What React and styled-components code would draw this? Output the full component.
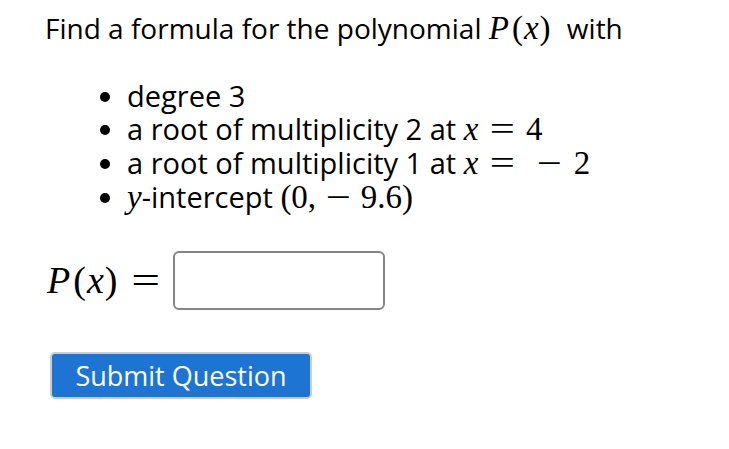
import React from 'react'
import styled, { createGlobalStyle } from 'styled-components'

const GlobalStyle = createGlobalStyle`
  html, body {
    margin: 0;
    padding: 0;
    background: #fff;
  }
  body {
    font-family: 'Open Sans', 'DejaVu Sans', sans-serif;
    color: #000;
  }
`

const Page = styled.div`
  padding: 11px 0 0 45px;
  font-size: 28px;
`

const Prompt = styled.p`
  margin: 0;
  line-height: 34px;
`

const Conditions = styled.ul`
  margin: 34px 0 0 0;
  padding: 0 0 0 82px;
  font-size: 29px;
  line-height: 33px;
`

/* inline math, KaTeX-ish */
const Math = styled.span`
  font-family: 'Liberation Serif', 'Times New Roman', serif;
  font-size: ${p => p.$size || '33px'};
  line-height: 1;
  white-space: nowrap;
  margin-right: ${p => p.$after || '0'};
`

const V = styled.span`
  font-style: italic;
  margin: ${p => p.$m || '0'};
`

const N = styled.span`
  margin: ${p => p.$m || '0'};
`

// relation / binary operator: thin strokes, stretched wide like the TeX glyphs
const Op = styled.span`
  display: inline-block;
  transform: scaleX(1.35);
  margin: ${p => p.$m || '0 14px'};
`

const AnswerRow = styled.div`
  display: flex;
  align-items: center;
  margin-top: 37px;
  height: 59px;
`

const AnswerLabel = styled.span`
  display: inline-block;
  width: 128px;
  padding: 0 0 0 2px;
  box-sizing: border-box;
`

const AnswerInput = styled.input`
  width: 212px;
  height: 59px;
  box-sizing: border-box;
  border: 2px solid #858585;
  border-radius: 6px;
  font-size: 22px;
  padding: 0 10px;
  outline: none;
  background: #fff;
`

const SubmitButton = styled.button`
  display: flex;
  align-items: center;
  justify-content: center;
  margin: 42px 0 0 5px;
  width: 262px;
  height: 47px;
  padding: 0;
  background: #1e74d2;
  color: #fff;
  border: 2px solid #cdcdcd;
  border-radius: 5px;
  font-family: 'Open Sans', 'DejaVu Sans', sans-serif;
  font-size: 27px;
  cursor: pointer;
`

export default function App() {
  return (
    <>
      <GlobalStyle />
      <Page>
        <Prompt>
          Find a formula for the polynomial{' '}
          <Math $after="9px">
            <V $m="0 3px 0 0">P</V>
            <N>(</N>
            <V $m="0 1px">x</V>
            <N>)</N>
          </Math>{' '}
          with
        </Prompt>
        <Conditions>
          <li>degree 3</li>
          <li>
            a root of multiplicity 2 at{' '}
            <Math>
              <V $m="0 1px 0 0">x</V>
              <Op>=</Op>
              <N>4</N>
            </Math>
          </li>
          <li>
            a root of multiplicity 1 at{' '}
            <Math>
              <V $m="0 1px 0 0">x</V>
              <Op>=</Op>
              <Op $m="0 15px 0 14px">−</Op>
              <N>2</N>
            </Math>
          </li>
          <li>
            <Math>
              <V>y</V>
            </Math>
            -intercept{' '}
            <Math>
              <N>(0,</N>
              <Op $m="0 13px">−</Op>
              <N>9.6)</N>
            </Math>
          </li>
        </Conditions>
        <AnswerRow>
          <AnswerLabel>
            <Math $size="38px">
              <V $m="0 3px 0 0">P</V>
              <N>(</N>
              <V $m="0 1px">x</V>
              <N>)</N>
              <Op $m="0 0 0 18px">=</Op>
            </Math>
          </AnswerLabel>
          <AnswerInput type="text" aria-label="P(x)" />
        </AnswerRow>
        <SubmitButton type="button">Submit Question</SubmitButton>
      </Page>
    </>
  )
}
